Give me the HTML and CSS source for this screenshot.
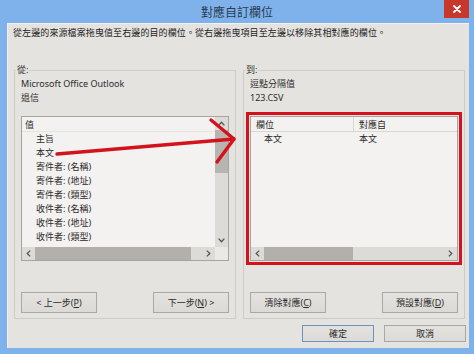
FILE: index.html
```html
<!DOCTYPE html>
<html lang="zh-Hant">
<head>
<meta charset="utf-8">
<title>對應自訂欄位</title>
<link rel="stylesheet" href="styles.css">
</head>
<body>
<div class="window">
  <div class="titlebar">
    <div class="title">對應自訂欄位</div>
    <div class="close"><svg width="8" height="8" viewBox="0 0 8 8"><path d="M1 1 L7 7 M7 1 L1 7" stroke="#fff" stroke-width="1.8" stroke-linecap="round"/></svg></div>
  </div>
  <div class="client">
    <p class="hint">從左邊的來源檔案拖曳值至右邊的目的欄位。從右邊拖曳項目至左邊以移除其相對應的欄位。</p>
    <div class="panels">
      <fieldset class="group">
        <legend>從:</legend>
        <div class="src">Microsoft Office Outlook</div>
        <div class="src">退信</div>
        <div class="list list-src">
          <div class="view">
            <div class="head">值</div>
            <div class="item">主旨</div>
            <div class="item">本文</div>
            <div class="item">寄件者: (名稱)</div>
            <div class="item">寄件者: (地址)</div>
            <div class="item">寄件者: (類型)</div>
            <div class="item">收件者: (名稱)</div>
            <div class="item">收件者: (地址)</div>
            <div class="item">收件者: (類型)</div>
          </div>
          <div class="vscroll">
            <div class="sbtn"><svg width="7" height="5" viewBox="0 0 7 5"><path d="M0.6 4.4 L3.5 1.2 L6.4 4.4" fill="none" stroke="#555" stroke-width="1.3"/></svg></div>
            <div class="vthumb"></div>
            <div class="track"></div>
            <div class="sbtn"><svg width="7" height="5" viewBox="0 0 7 5"><path d="M0.6 0.6 L3.5 3.8 L6.4 0.6" fill="none" stroke="#555" stroke-width="1.3"/></svg></div>
          </div>
          <div class="hscroll">
            <div class="sbtn"><svg width="5" height="7" viewBox="0 0 5 7"><path d="M4.2 0.6 L1.2 3.5 L4.2 6.4" fill="none" stroke="#555" stroke-width="1.3"/></svg></div>
            <div class="hthumb hthumb-src"></div>
            <div class="track"></div>
            <div class="sbtn"><svg width="5" height="7" viewBox="0 0 5 7"><path d="M0.8 0.6 L3.8 3.5 L0.8 6.4" fill="none" stroke="#555" stroke-width="1.3"/></svg></div>
          </div>
          <div class="corner"></div>
        </div>
        <div class="btns">
          <button class="btn btn-wide">&lt; 上一步(<u>P</u>)</button>
          <button class="btn btn-wide">下一步(<u>N</u>) &gt;</button>
        </div>
      </fieldset>
      <fieldset class="group">
        <legend>到:</legend>
        <div class="src">逗點分隔值</div>
        <div class="src">123.CSV</div>
        <div class="list list-dst">
          <div class="view">
            <div class="cols head">
              <div class="col1">欄位</div>
              <div class="col2">對應自</div>
            </div>
            <div class="cols row">
              <div class="col1 indent">本文</div>
              <div class="col2">本文</div>
            </div>
          </div>
          <div class="hscroll">
            <div class="sbtn"><svg width="5" height="7" viewBox="0 0 5 7"><path d="M4.2 0.6 L1.2 3.5 L4.2 6.4" fill="none" stroke="#555" stroke-width="1.3"/></svg></div>
            <div class="hthumb hthumb-dst"></div>
            <div class="track"></div>
            <div class="sbtn"><svg width="5" height="7" viewBox="0 0 5 7"><path d="M0.8 0.6 L3.8 3.5 L0.8 6.4" fill="none" stroke="#555" stroke-width="1.3"/></svg></div>
          </div>
        </div>
        <div class="btns">
          <button class="btn btn-wide">清除對應(<u>C</u>)</button>
          <button class="btn btn-wide">預設對應(<u>D</u>)</button>
        </div>
      </fieldset>
    </div>
    <div class="footer">
      <button class="btn btn-ok">確定</button>
      <button class="btn btn-cancel">取消</button>
    </div>
  </div>
</div>
<svg class="annot" width="474" height="354" viewBox="0 0 474 354">
  <path d="M57 154 L234 139" fill="none" stroke="#d3121c" stroke-width="3.4" stroke-linecap="round"/>
  <path d="M211 120 L234 139 L217 162" fill="none" stroke="#d3121c" stroke-width="3.4" stroke-linecap="round" stroke-linejoin="round"/>
</svg>
</body>
</html>
```

FILE: styles.css
```css
html, body {
  margin: 0;
  padding: 0;
}
body {
  position: relative;
  width: 474px;
  height: 354px;
  background: #7fb2ea;
  font-family: "Noto Sans", "Noto Sans CJK TC", sans-serif;
  font-size: 9px;
  color: #2b2b2b;
  overflow: hidden;
}
.window {
  display: flex;
  flex-direction: column;
  width: 474px;
  height: 354px;
}
.titlebar {
  height: 23px;
  display: grid;
  grid-template-columns: 1fr auto 1fr;
  align-items: start;
}
.title {
  grid-column: 2;
  font-family: "Noto Sans CJK TC", sans-serif;
  font-size: 12px;
  line-height: 24px;
  color: #2a3b52;
}
.close {
  grid-column: 3;
  justify-self: end;
  margin-right: 5px;
  width: 25px;
  height: 18px;
  background: #c7382c;
  display: flex;
  align-items: center;
  justify-content: center;
}
.client {
  margin: 0 5px 6px 7px;
  height: 325px;
  box-sizing: border-box;
  background: #e5e3e0;
  border-top: 1px solid #f3f2f0;
  border-left: 1px solid #f0efed;
  display: flex;
  flex-direction: column;
}
.hint {
  margin: 0;
  padding: 3px 5px 0;
  line-height: 12px;
  color: #222;
  letter-spacing: 0.1px;
}
.panels {
  margin-top: 25px;
  display: flex;
  gap: 7px;
  padding-left: 6px;
}
.group {
  width: 222px;
  box-sizing: border-box;
  margin: 0;
  padding: 1px 6px 5px;
  border: 1px solid #cfccc8;
  min-width: 0;
}
.group legend {
  padding: 0 1px;
  margin-left: -5px;
  line-height: 12px;
  color: #2b2b2b;
}
.src {
  line-height: 14px;
  color: #2b2b2b;
}
.list {
  margin-top: 11px;
  width: 208px;
  height: 145px;
  box-sizing: border-box;
  border: 1px solid #a6a4a1;
  background: #f3f2f0;
  display: grid;
  outline-color: #d3121c;
}
.list-src {
  grid-template-columns: 1fr 13px;
  grid-template-rows: 1fr 13px;
}
.list-dst {
  grid-template-columns: 1fr;
  grid-template-rows: 1fr 13px;
  outline: 3px solid #d3121c;
  outline-offset: 1px;
}
.view {
  overflow: hidden;
  min-height: 0;
}
.head {
  height: 15px;
  line-height: 15px;
  box-sizing: border-box;
  border-bottom: 1px solid #e6e4e1;
}
.list-src .head {
  padding-left: 3px;
}
.item {
  height: 14px;
  line-height: 14px;
  padding-left: 14px;
  white-space: nowrap;
}
.cols {
  display: flex;
}
.cols .col1 {
  width: 103px;
  box-sizing: border-box;
  padding-left: 5px;
}
.cols .col2 {
  flex: 1;
  padding-left: 5px;
}
.cols.head {
  border-bottom: 1px solid #d9d7d4;
}
.cols.head .col1 {
  border-right: 1px solid #d9d7d4;
}
.cols.row {
  height: 14px;
  line-height: 14px;
}
.cols .indent {
  padding-left: 13px;
}
.vscroll {
  display: flex;
  flex-direction: column;
  background: #dddbd8;
}
.hscroll {
  display: flex;
  background: #dddbd8;
}
.sbtn {
  flex: 0 0 13px;
  height: 13px;
  display: flex;
  align-items: center;
  justify-content: center;
}
.vthumb {
  flex: 0 0 43px;
  background: #b8b4b0;
}
.hthumb {
  background: #b3afab;
}
.hthumb-src {
  flex: 0 0 156px;
}
.hthumb-dst {
  flex: 0 0 89px;
}
.track {
  flex: 1;
}
.corner {
  background: #ebe9e6;
}
.btns {
  margin-top: 31px;
  display: flex;
  justify-content: space-between;
}
.btn {
  font-family: "Noto Sans", "Noto Sans CJK TC", sans-serif;
  font-size: 9px;
  color: #2b2b2b;
  background: linear-gradient(#e4e2df, #dcdad7);
  border: 1px solid #aba8a4;
  border-radius: 0;
  padding: 0;
  margin: 0;
  box-sizing: border-box;
}
.btn u {
  text-decoration-thickness: 1px;
}
.btn-wide {
  width: 76px;
  height: 21px;
}
.footer {
  margin-top: 6px;
  display: flex;
  justify-content: flex-end;
  gap: 10px;
  padding-right: 3px;
}
.btn-ok {
  width: 72px;
  height: 17px;
  border-color: #6c93bd;
}
.btn-cancel {
  width: 82px;
  height: 17px;
}
.annot {
  position: absolute;
  left: 0;
  top: 0;
  pointer-events: none;
}
```
